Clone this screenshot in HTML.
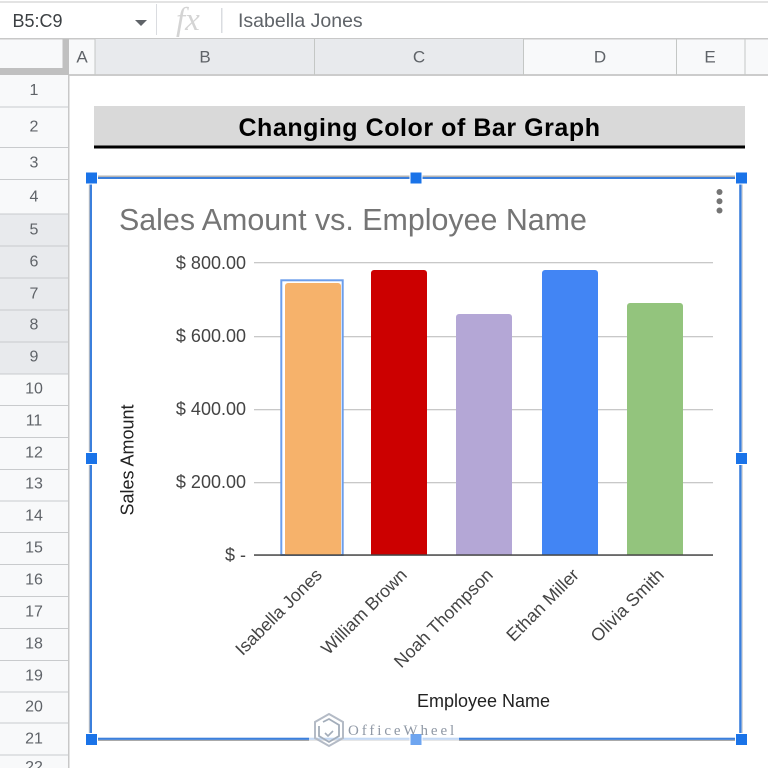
<!DOCTYPE html>
<html>
<head>
<meta charset="utf-8">
<style>
html,body{margin:0;padding:0;width:768px;height:768px;overflow:hidden;background:#fff}
svg{display:block;position:absolute;left:0;top:0;filter:blur(.35px)}
text{font-family:"Liberation Sans",sans-serif}
.rn{font-size:16px;fill:#5f6368;text-anchor:middle}
.cl{font-size:17px;fill:#5f6368;text-anchor:middle}
.ax{font-size:18px;fill:#444;text-anchor:end}
.xl{font-size:17.800px;fill:#444;text-anchor:end}
</style>
</head>
<body>
<svg width="768" height="768" viewBox="0 0 768 768" xmlns="http://www.w3.org/2000/svg">
<rect width="768" height="768" fill="#fff"/>
<!-- formula bar -->
<rect x="0" y="1" width="768" height="2" fill="#e3e3e3"/>
<text x="12.500" y="27" font-size="18" fill="#3c4043">B5:C9</text>
<path d="M135 20h12l-6 6z" fill="#5f6368"/>
<rect x="156" y="4" width="1" height="31" fill="#dadce0"/>
<text x="176" y="30" font-size="33" fill="#d4d4d4" style="font-family:'Liberation Serif',serif;font-style:italic">fx</text>
<rect x="221" y="8" width="1.500" height="25" fill="#dadce0"/>
<text x="238" y="27" font-size="19.500" fill="#5f6368">Isabella Jones</text>
<!-- column headers -->
<rect x="0" y="38" width="768" height="37" fill="#f8f9fa"/>
<rect x="0" y="38" width="768" height="1.500" fill="#c8c8c8"/>
<rect x="95" y="39" width="428" height="35" fill="#e8eaed"/>
<rect x="0" y="68" width="69" height="7" fill="#c0c0c0"/>
<rect x="62.500" y="39" width="6.500" height="30" fill="#c0c0c0"/>
<rect x="69" y="74" width="699" height="2" fill="#cccccc"/>
<g fill="#c4c7c5">
<rect x="94.500" y="39" width="1" height="36"/>
<rect x="314" y="39" width="1" height="36"/>
<rect x="523" y="39" width="1" height="36"/>
<rect x="676" y="39" width="1" height="36"/>
<rect x="744.500" y="39" width="1" height="36"/>
</g>
<text class="cl" x="82" y="62.500">A</text>
<text class="cl" x="205" y="62.500">B</text>
<text class="cl" x="419" y="62.500">C</text>
<text class="cl" x="600" y="62.500">D</text>
<text class="cl" x="710" y="62.500">E</text>
<!-- row headers -->
<rect x="0" y="75" width="68" height="693" fill="#f8f9fa"/>
<rect x="0" y="214" width="68" height="160" fill="#e8eaed"/>
<rect x="68" y="75" width="1.500" height="693" fill="#c8c8c8"/>
<g fill="#c9cbcd">
<rect x="0" y="106.500" width="68" height="1"/>
<rect x="0" y="147" width="68" height="1"/>
<rect x="0" y="179" width="68" height="1"/>
<rect x="0" y="213.500" width="68" height="1"/>
<rect x="0" y="245.500" width="68" height="1"/>
<rect x="0" y="277.500" width="68" height="1"/>
<rect x="0" y="309.500" width="68" height="1"/>
<rect x="0" y="341.500" width="68" height="1"/>
<rect x="0" y="373.500" width="68" height="1"/>
<rect x="0" y="405" width="68" height="1"/>
<rect x="0" y="437" width="68" height="1"/>
<rect x="0" y="469" width="68" height="1"/>
<rect x="0" y="500.500" width="68" height="1"/>
<rect x="0" y="532" width="68" height="1"/>
<rect x="0" y="564" width="68" height="1"/>
<rect x="0" y="596" width="68" height="1"/>
<rect x="0" y="628" width="68" height="1"/>
<rect x="0" y="660" width="68" height="1"/>
<rect x="0" y="691.500" width="68" height="1"/>
<rect x="0" y="722.500" width="68" height="1"/>
<rect x="0" y="754.500" width="68" height="1"/>
</g>
<text class="rn" x="34" y="95">1</text>
<text class="rn" x="34" y="131.500">2</text>
<text class="rn" x="34" y="167.500">3</text>
<text class="rn" x="34" y="201.500">4</text>
<text class="rn" x="34" y="234.500">5</text>
<text class="rn" x="34" y="266.500">6</text>
<text class="rn" x="34" y="298.500">7</text>
<text class="rn" x="34" y="329.500">8</text>
<text class="rn" x="34" y="361.500">9</text>
<text class="rn" x="34" y="393.500">10</text>
<text class="rn" x="34" y="425.500">11</text>
<text class="rn" x="34" y="457.500">12</text>
<text class="rn" x="34" y="488.500">13</text>
<text class="rn" x="34" y="520.500">14</text>
<text class="rn" x="34" y="552.500">15</text>
<text class="rn" x="34" y="584.500">16</text>
<text class="rn" x="34" y="616.500">17</text>
<text class="rn" x="34" y="648.500">18</text>
<text class="rn" x="34" y="680.500">19</text>
<text class="rn" x="34" y="711.500">20</text>
<text class="rn" x="34" y="743.500">21</text>
<text class="rn" x="34" y="772">22</text>
<!-- heading -->
<rect x="94" y="106" width="651" height="41" fill="#d9d9d9"/>
<rect x="94" y="145.500" width="651" height="3" fill="#000"/>
<text x="419.500" y="136" font-size="25" font-weight="700" fill="#000" text-anchor="middle" letter-spacing=".55">Changing Color of Bar Graph</text>
<!-- chart frame -->
<rect x="91" y="175.500" width="650" height="1.500" fill="#b5b5b5"/>
<rect x="91" y="177" width="650" height="2" fill="#3b7fdc"/>
<rect x="91" y="737.700" width="650" height="2.200" fill="#3b7fdc"/>
<rect x="91" y="739.900" width="650" height="1.100" fill="#aaa"/>
<rect x="88.800" y="178" width="1.200" height="562" fill="#c0c0c0"/>
<rect x="89.800" y="178" width="2.200" height="562" fill="#3b7fdc"/>
<rect x="739.200" y="178" width="2.500" height="562" fill="#3b7fdc"/>
<rect x="741.700" y="178" width="1.200" height="562" fill="#d5d5d5"/>
<!-- title & menu -->
<text x="119" y="230" font-size="30.400" fill="#757575">Sales Amount vs. Employee Name</text>
<circle cx="719.500" cy="192" r="3" fill="#757575"/>
<circle cx="719.500" cy="201.300" r="3" fill="#757575"/>
<circle cx="719.500" cy="210.500" r="3" fill="#757575"/>
<!-- gridlines -->
<g fill="#c8c8c8">
<rect x="254" y="262" width="459" height="1.300"/>
<rect x="254" y="336" width="459" height="1.300"/>
<rect x="254" y="409" width="459" height="1.300"/>
<rect x="254" y="482" width="459" height="1.300"/>
</g>
<text class="ax" x="246" y="269">$ 800.00</text>
<text class="ax" x="246" y="342">$ 600.00</text>
<text class="ax" x="246" y="415">$ 400.00</text>
<text class="ax" x="246" y="488">$ 200.00</text>
<text class="ax" x="246" y="561">$ -</text>
<!-- bars -->
<rect x="281.300" y="280.300" width="61.400" height="274.700" fill="#fff" stroke="#6d9eeb" stroke-width="2"/>
<path d="M285 555V286a3 3 0 0 1 3-3h50a3 3 0 0 1 3 3V555z" fill="#f6b26b"/>
<path d="M371 555V273a3 3 0 0 1 3-3h50a3 3 0 0 1 3 3V555z" fill="#cc0000"/>
<path d="M456 555V317a3 3 0 0 1 3-3h50a3 3 0 0 1 3 3V555z" fill="#b4a7d6"/>
<path d="M542 555V273a3 3 0 0 1 3-3h50a3 3 0 0 1 3 3V555z" fill="#4285f4"/>
<path d="M627 555V306a3 3 0 0 1 3-3h50a3 3 0 0 1 3 3V555z" fill="#93c47d"/>
<rect x="254" y="554.300" width="459" height="1.500" fill="#444"/>
<!-- axis labels -->
<text x="133.500" y="460" font-size="18" fill="#222" text-anchor="middle" transform="rotate(-90 133.500 460)">Sales Amount</text>
<text x="483.500" y="707" font-size="18" fill="#222" text-anchor="middle">Employee Name</text>
<text class="xl" transform="translate(323 576) rotate(-45)">Isabella Jones</text>
<text class="xl" transform="translate(408 576) rotate(-45)">William Brown</text>
<text class="xl" transform="translate(494 576) rotate(-45)">Noah Thompson</text>
<text class="xl" transform="translate(580 576) rotate(-45)">Ethan Miller</text>
<text class="xl" transform="translate(665 576) rotate(-45)">Olivia Smith</text>
<!-- handles -->
<g fill="#1a73e8" stroke="#fff" stroke-width="1">
<rect x="85.500" y="172" width="12" height="12"/>
<rect x="410" y="172" width="12" height="12"/>
<rect x="735.500" y="172" width="12" height="12"/>
<rect x="85.500" y="452.500" width="12" height="12"/>
<rect x="735.500" y="452.500" width="12" height="12"/>
<rect x="85.500" y="733.500" width="12" height="12"/>
<rect x="735.500" y="733.500" width="12" height="12"/>
<rect x="410" y="733.500" width="12" height="12"/>
</g>
<!-- watermark -->
<rect x="309" y="710" width="150" height="31" fill="#fff" fill-opacity=".7"/>
<rect x="410.500" y="734" width="11" height="11" fill="#6ea5f0"/>
<path d="M329 714l14 8v16l-14 8-14-8v-16z" fill="none" stroke="#b4bbc6" stroke-width="2"/>
<path d="M319 726v10l10 6 10-6v-11l-10-6-6 3" fill="none" stroke="#a3adba" stroke-width="1.800"/>
<path d="M325 733l3 3 5-5" fill="none" stroke="#a3adba" stroke-width="1.600"/>
<text x="348" y="735" font-size="15" fill="#8f98a5" letter-spacing="2.900" style="font-family:'Liberation Serif',serif">OfficeWheel</text>
</svg>
</body>
</html>
